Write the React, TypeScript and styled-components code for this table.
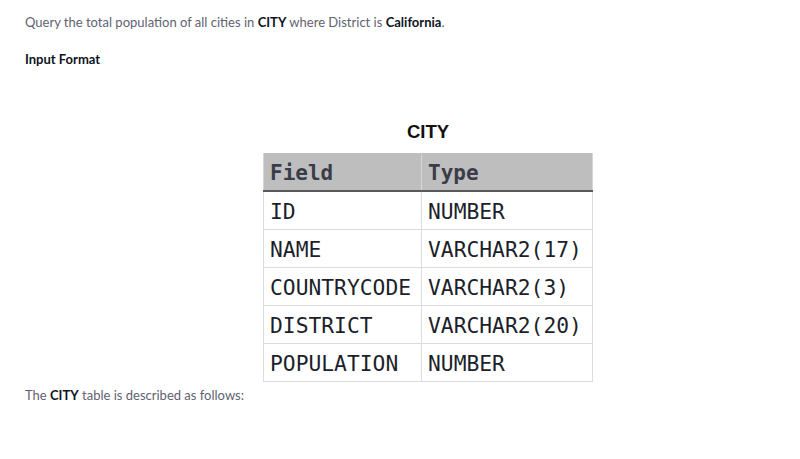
import React from "react";
import styled, { createGlobalStyle } from "styled-components";

const Global = createGlobalStyle`
  html, body { margin: 0; padding: 0; background: #ffffff; }
  body { font-family: Lato, "Liberation Sans", sans-serif; }
`;

const Page = styled.div`
  width: 800px;
  height: 459px;
  box-sizing: border-box;
  padding: 14px 25px 0 25px;
  display: flex;
  flex-direction: column;
  background: #fff;
`;

const Para = styled.p<{ $mt?: number }>`
  margin: ${(p) => p.$mt ?? 0}px 0 0 0;
  font-size: 13px;
  line-height: 16px;
  color: #5f6270;
`;

const Strong = styled.strong`
  color: #0e141e;
  font-weight: 700;
`;

const Heading = styled.h3`
  margin: 21px 0 0 0;
  font-size: 13px;
  line-height: 16px;
  font-weight: 700;
  color: #0e141e;
`;

const Figure = styled.div`
  margin: 54px 0 0 238px;
  width: 330px;
  display: flex;
  flex-direction: column;
  align-items: center;
`;

const Caption = styled.div`
  font-family: "Liberation Sans", Arial, sans-serif;
  font-weight: 700;
  font-size: 18.5px;
  line-height: 21px;
  color: #111;
  margin-bottom: 11px;
`;

const Table = styled.table`
  width: 330px;
  border-collapse: collapse;
  font-family: "DejaVu Sans Mono", monospace;
  color: #1c1f2b;
`;

const Th = styled.th<{ $w?: number }>`
  background: #bebebe;
  text-align: left;
  font-weight: 700;
  font-size: 21px;
  height: 38px;
  padding: 2px 6px 0 6px;
  border-left: 1px solid #d6d6d6;
  border-right: 1px solid #d6d6d6;
  border-bottom: 2px solid #5a5a5a;
  color: #3a3d48;
  width: ${(p) => (p.$w ? `${p.$w}px` : "auto")};
  box-sizing: border-box;
`;

const Td = styled.td`
  font-size: 21.3px;
  height: 38px;
  padding: 2px 6px 0 6px;
  border: 1px solid #dcdcdc;
  white-space: nowrap;
  box-sizing: border-box;
`;

const rows: [string, string][] = [
  ["ID", "NUMBER"],
  ["NAME", "VARCHAR2(17)"],
  ["COUNTRYCODE", "VARCHAR2(3)"],
  ["DISTRICT", "VARCHAR2(20)"],
  ["POPULATION", "NUMBER"],
];

export default function App() {
  return (
    <>
      <Global />
      <Page>
        <Para>
          Query the total population of all cities in <Strong>CITY</Strong> where District is{" "}
          <Strong>California</Strong>.
        </Para>
        <Heading>Input Format</Heading>
        <Figure>
          <Caption>CITY</Caption>
          <Table>
            <thead>
              <tr>
                <Th $w={158}>Field</Th>
                <Th>Type</Th>
              </tr>
            </thead>
            <tbody>
              {rows.map(([f, t]) => (
                <tr key={f}>
                  <Td>{f}</Td>
                  <Td>{t}</Td>
                </tr>
              ))}
            </tbody>
          </Table>
        </Figure>
        <Para $mt={5}>
          The <Strong>CITY</Strong> table is described as follows:
        </Para>
      </Page>
    </>
  );
}
